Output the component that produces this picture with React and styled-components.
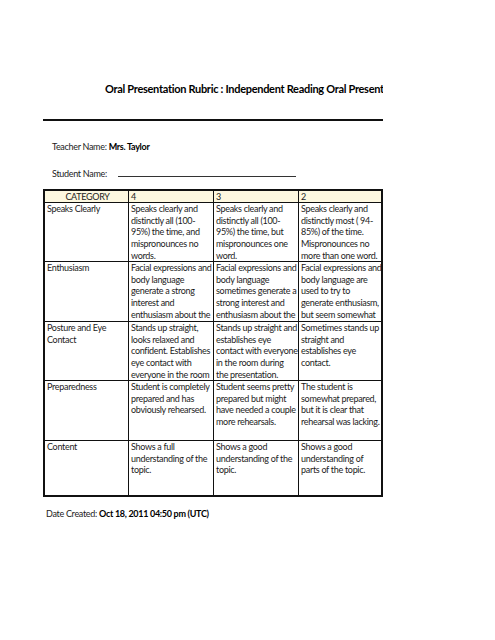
import React from 'react'
import styled, { createGlobalStyle } from 'styled-components'

const GlobalStyle = createGlobalStyle`
  body {
    margin: 0;
    background: #fff;
    font-family: Lato, "Liberation Sans", sans-serif;
    color: #1c1c1c;
  }
`

const Page = styled.div`
  width: 495px;
  height: 640px;
  padding-left: 43px;
  box-sizing: border-box;
  display: flex;
  flex-direction: column;
  align-items: flex-start;
`

const Title = styled.h1`
  margin: 81px 0 0;
  width: 340px;
  padding-left: 62px;
  box-sizing: border-box;
  font-size: 11px;
  letter-spacing: -0.3px;
  line-height: 16px;
  font-weight: 700;
  color: #000;
  white-space: nowrap;
  overflow: hidden;
`

const Rule = styled.hr`
  margin: 22px 0 0;
  width: 340px;
  height: 0;
  border: none;
  border-top: 2px solid #111;
`

const InfoLine = styled.div`
  margin-top: ${p => p.gap}px;
  padding-left: ${p => p.indent}px;
  font-size: 9px;
  letter-spacing: -0.3px;
  line-height: 12px;
  white-space: nowrap;
  b {
    color: #000;
  }
`

const Blank = styled.span`
  display: inline-block;
  width: 178px;
  margin-left: 11px;
  height: 9px;
  border-bottom: 1px solid #333;
`

const Table = styled.div`
  margin-top: 9px;
  display: grid;
  grid-template-columns: 83px 84px 84px 82px;
  grid-template-rows: 11px 58px 59px 58px 59px 54px;
  gap: 1px;
  background: #111;
  border: 2px solid #111;
`

const Cell = styled.div`
  background: ${p => (p.head ? '#fdf8e0' : '#fff')};
  padding: 0 0 0 2px;
  font-size: 9px;
  letter-spacing: -0.3px;
  line-height: 11.7px;
  text-align: ${p => (p.center ? 'center' : 'left')};
  white-space: nowrap;
  overflow: hidden;
`

const Line = styled.div``

const rows = [
  [
    ['Speaks Clearly'],
    ['Speaks clearly and', 'distinctly all (100-', '95%) the time, and', 'mispronounces no', 'words.'],
    ['Speaks clearly and', 'distinctly all (100-', '95%) the time, but', 'mispronounces one', 'word.'],
    ['Speaks clearly and', 'distinctly most ( 94-', '85%) of the time.', 'Mispronounces no', 'more than one word.'],
  ],
  [
    ['Enthusiasm'],
    ['Facial expressions and', 'body language', 'generate a strong', 'interest and', 'enthusiasm about the'],
    ['Facial expressions and', 'body language', 'sometimes generate a', 'strong interest and', 'enthusiasm about the'],
    ['Facial expressions and', 'body language are', 'used to try to', 'generate enthusiasm,', 'but seem somewhat'],
  ],
  [
    ['Posture and Eye', 'Contact'],
    ['Stands up straight,', 'looks relaxed and', 'confident. Establishes', 'eye contact with', 'everyone in the room'],
    ['Stands up straight and', 'establishes eye', 'contact with everyone', 'in the room during', 'the presentation.'],
    ['Sometimes stands up', 'straight and', 'establishes eye', 'contact.'],
  ],
  [
    ['Preparedness'],
    ['Student is completely', 'prepared and has', 'obviously rehearsed.'],
    ['Student seems pretty', 'prepared but might', 'have needed a couple', 'more rehearsals.'],
    ['The student is', 'somewhat prepared,', 'but it is clear that', 'rehearsal was lacking.'],
  ],
  [
    ['Content'],
    ['Shows a full', 'understanding of the', 'topic.'],
    ['Shows a good', 'understanding of the', 'topic.'],
    ['Shows a good', 'understanding of', 'parts of the topic.'],
  ],
]

export default function App() {
  return (
    <Page>
      <GlobalStyle />
      <Title>Oral Presentation Rubric : Independent Reading Oral Present</Title>
      <Rule />
      <InfoLine gap={20} indent={9}>
        Teacher Name: <b>Mrs. Taylor</b>
      </InfoLine>
      <InfoLine gap={14} indent={9}>
        Student Name:<Blank />
      </InfoLine>
      <Table>
        <Cell head center>CATEGORY</Cell>
        <Cell head>4</Cell>
        <Cell head>3</Cell>
        <Cell head>2</Cell>
        {rows.map((row, i) =>
          row.map((lines, j) => (
            <Cell key={`${i}-${j}`}>
              {lines.map((l, k) => (
                <Line key={k}>{l}</Line>
              ))}
            </Cell>
          ))
        )}
      </Table>
      <InfoLine gap={11} indent={3}>
        Date Created: <b>Oct 18, 2011 04:50 pm (UTC)</b>
      </InfoLine>
    </Page>
  )
}
